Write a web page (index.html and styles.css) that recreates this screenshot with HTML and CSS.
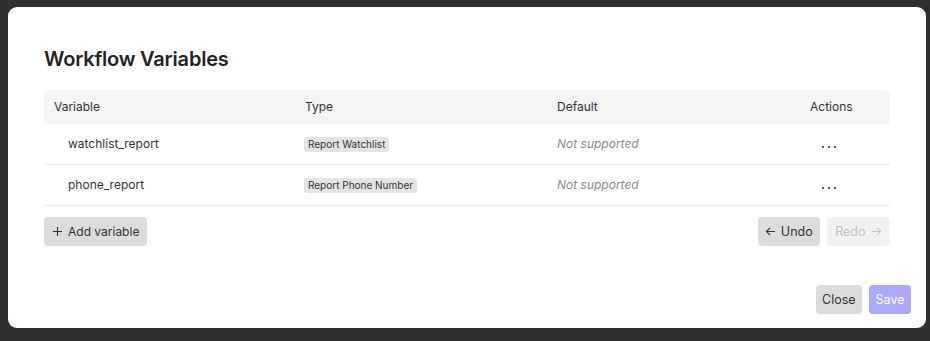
FILE: index.html
```html
<!DOCTYPE html>
<html lang="en">
<head>
    <meta charset="UTF-8">
    <title>Workflow Variables</title>
    <link rel="stylesheet" href="styles.css">
</head>
<body>
    <div class="modal">
        <div class="modal-body">
            <h2 class="title">Workflow Variables</h2>

            <div class="table">
                <div class="row head">
                    <div class="cell">Variable</div>
                    <div class="cell">Type</div>
                    <div class="cell">Default</div>
                    <div class="cell">Actions</div>
                </div>
                <div class="row">
                    <div class="cell name">watchlist_report</div>
                    <div class="cell"><span class="badge">Report Watchlist</span></div>
                    <div class="cell muted">Not supported</div>
                    <div class="cell"><span class="dots"><i></i><i></i><i></i></span></div>
                </div>
                <div class="row">
                    <div class="cell name">phone_report</div>
                    <div class="cell"><span class="badge">Report Phone Number</span></div>
                    <div class="cell muted">Not supported</div>
                    <div class="cell"><span class="dots"><i></i><i></i><i></i></span></div>
                </div>
            </div>

            <div class="toolbar">
                <button class="btn add">
                    <svg width="11" height="11" viewBox="0 0 12 12"><path d="M6 1v10M1 6h10" stroke="#333" stroke-width="1.2" fill="none"/></svg>
                    Add variable
                </button>
                <div class="history">
                    <button class="btn undo">
                        <svg width="11" height="11" viewBox="0 0 12 12"><path d="M11 6H1.5M5.5 2 1.5 6l4 4" stroke="#333" stroke-width="1.2" fill="none"/></svg>
                        Undo
                    </button>
                    <button class="btn disabled">
                        Redo
                        <svg width="11" height="11" viewBox="0 0 12 12"><path d="M1 6h9.5M6.5 2l4 4-4 4" stroke="#c4c4c4" stroke-width="1.2" fill="none"/></svg>
                    </button>
                </div>
            </div>
        </div>

        <div class="modal-footer">
            <button class="btn">Close</button>
            <button class="btn primary">Save</button>
        </div>
    </div>
</body>
</html>
```

FILE: styles.css
```css
* {
    box-sizing: border-box;
    font-family: 'Inter', 'Liberation Sans', sans-serif;
}

body {
    margin: 0;
    padding: 7px 4px 0 8px;
    height: 341px;
    background-color: #2f2f2f;
    overflow: hidden;
}

.modal {
    width: 918px;
    height: 321px;
    background-color: #fff;
    border-radius: 9px;
    display: flex;
    flex-direction: column;
}

.modal-body {
    padding: 40px 36px 0 36px;
    flex: 1;
}

.title {
    margin: 0 0 19px;
    font-size: 20px;
    line-height: 24px;
    font-weight: 600;
    color: #222;
    letter-spacing: -0.2px;
}

.table {
    width: 846px;
}

.row {
    display: grid;
    grid-template-columns: 251px 252px 253px 1fr;
    height: 41px;
    align-items: center;
    border-bottom: 1px solid #ececec;
    font-size: 12px;
    color: #333;
    padding-bottom: 1px;
}

.row.head {
    height: 34px;
    background-color: #f4f4f4;
    border-radius: 5px;
    border-bottom: none;
    font-size: 12px;
    color: #333;
}

.cell {
    padding-left: 10px;
}

.cell.name {
    padding-left: 24px;
}

.badge {
    display: inline-block;
    font-size: 10px;
    line-height: 15px;
    padding: 0 4px;
    background-color: #e4e4e4;
    border-radius: 3px;
    color: #333;
    margin-left: -1px;
}

.muted {
    font-style: italic;
    color: #8a8a8a;
    font-size: 12px;
}

.dots {
    display: inline-flex;
    gap: 4px;
    margin-left: 12px;
}

.dots i {
    width: 2px;
    height: 2px;
    border-radius: 50%;
    background-color: #222;
}

.toolbar {
    display: flex;
    justify-content: space-between;
    margin-top: 11px;
}

.history {
    display: flex;
    gap: 7px;
}

.btn {
    display: inline-flex;
    align-items: center;
    gap: 5px;
    height: 29px;
    padding: 0 8.5px;
    border: none;
    border-radius: 4px;
    background-color: #dcdcdc;
    color: #333;
    font-size: 12.5px;
}

.btn.add {
    padding: 0 8px;
    font-size: 12px;
}

.btn.undo {
    padding: 0 7px;
}

.btn.disabled {
    background-color: #f2f2f2;
    color: #c0c0c0;
}

.btn.primary {
    background-color: #a9a9fa;
    color: #fff;
}

.modal-footer {
    display: flex;
    justify-content: flex-end;
    gap: 7px;
    padding: 0 15px 14px;
}

.modal-footer .btn {
    padding: 0 6.5px;
}
```
